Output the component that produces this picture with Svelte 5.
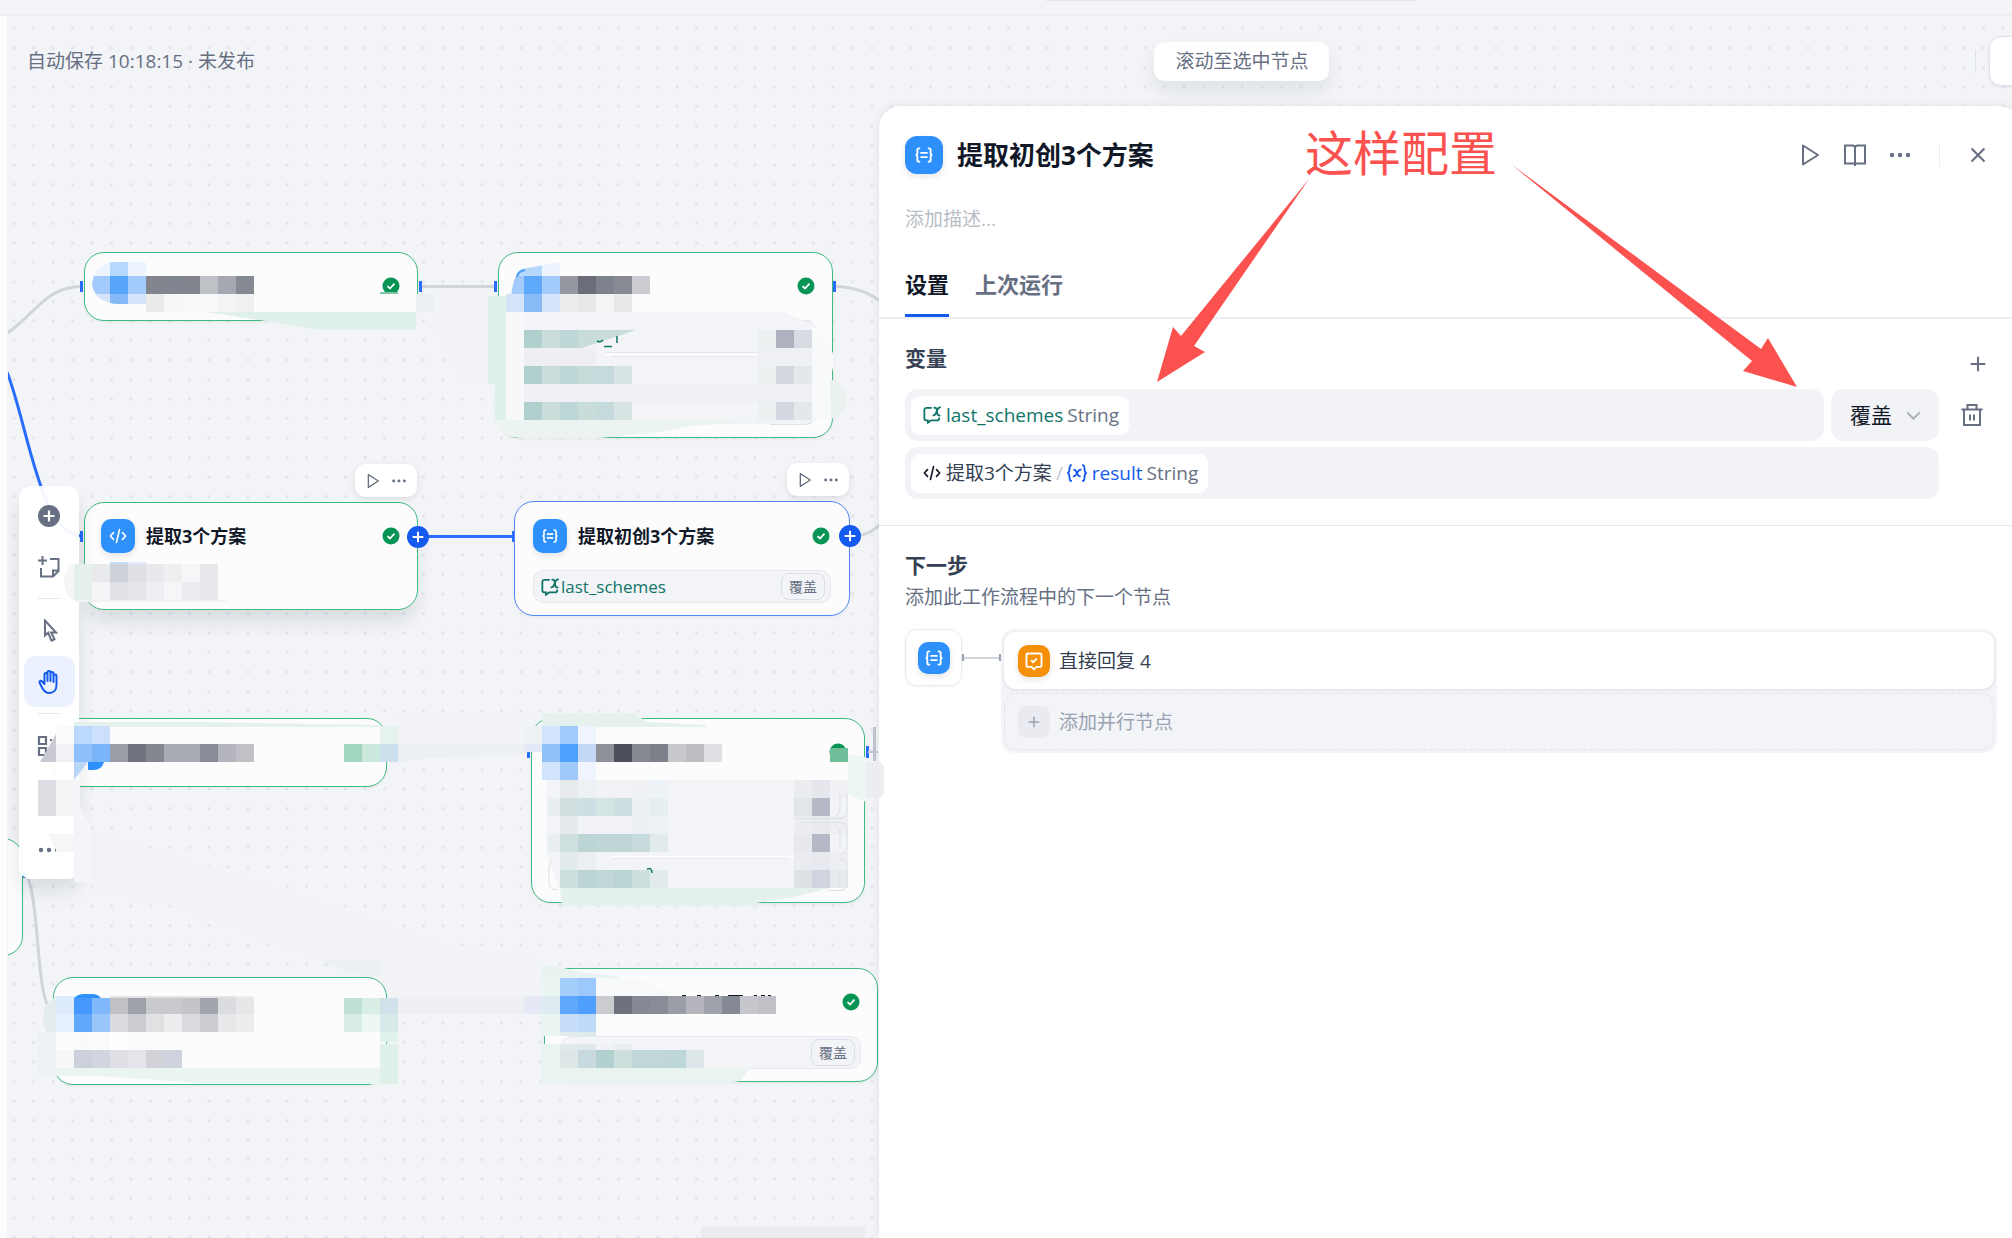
<script lang="ts">
	type Node = {
		x: number;
		y: number;
		w: number;
		h: number;
		title?: string;
		icon?: 'code' | 'assign';
		variable?: string;
		badge?: string;
		done?: boolean;
		selected?: boolean;
		raised?: boolean;
		toolbar?: boolean;
	};

	const nodes: Node[] = [
		{ x: -120, y: 838, w: 143, h: 118 },
		{ x: 84, y: 252, w: 334, h: 69, done: true },
		{ x: 498, y: 252, w: 335, h: 186, done: true },
		{ x: 84, y: 502, w: 334, h: 108, title: '提取3个方案', icon: 'code', done: true, raised: true, toolbar: true },
		{ x: 514, y: 501, w: 336, h: 115, title: '提取初创3个方案', icon: 'assign', variable: 'last_schemes', badge: '覆盖', done: true, selected: true, toolbar: true },
		{ x: 54, y: 718, w: 333, h: 69 },
		{ x: 531, y: 718, w: 334, h: 185, done: true },
		{ x: 53, y: 977, w: 334, h: 108 },
		{ x: 544, y: 968, w: 334, h: 114, variable: ' ', badge: '覆盖', done: true }
	];

	// mosaic rows: x, y, height, then one colour per 18px cell ('-' leaves a gap)
	const mosaic: [number, number, number, string][] = [
		[146, 276, 18, '83858e 808590 83858e bec1c6 a5a8b0 858992'],
		[146, 294, 18, 'ebebec f6f7f9 f8f9fa f8f9fa f3f4f5 eff0f2'],
		[380, 292, 2, '7fc4a2'],
		[380, 294, 18, 'fbfcfc fbfcfc ebf1f3'],

		[560, 276, 18, '9598a0 6b6e7a 7e828c 878a93 cbccd1'],
		[506, 294, 18, 'd5e5f9 87bbf8 d5e5f9 ececee e7e8ea f3f4f6 e7e8ea'],
		[524, 348, 18, 'efeff3 efeff3 efeff3 efeff3'],
		[524, 384, 18, 'eff0f4 eff0f4 eff0f4 eff0f4 eff0f4 eff0f4 eff0f4 eff0f4 eff0f4 eff0f4 eff0f4 eff0f4 eff0f4 eff0f4 eff0f4 eff0f4'],
		[524, 330, 18, 'b0d0ce c9ddda bcd7d5'],
		[524, 366, 18, 'b1cfcd c9ddda bcd7d5 c5dcda c5dadb d6e5e3'],
		[524, 402, 18, 'b0d0ce c9ddda bcd7d5 c8dcda c5dadb d6e5e3'],
		[758, 330, 18, 'ecf0f1 aeb2be d8dbe2'],
		[758, 348, 18, 'eff0f4 eff0f4 eff0f4'],
		[758, 366, 18, 'ecf0f1 d4d7df e4e8eb'],
		[758, 402, 18, 'ecf0f1 d4d7df e4e8eb'],

		[110, 562, 2, 'c6dcf7 dfeafa'],
		[74, 564, 18, 'e5f0ec e9eaed cfd1da dfe0e6 e8e9ed eeeff1 f5f6f8 e7e8ec'],
		[74, 582, 18, 'e5f0ec f5f5f8 e1e2e8 e4e5e9 edeef1 f5f6f8 ecedf1 e7e8ed'],

		[56, 726, 18, 'fafbfc bbd9fc cce0fc'],
		[380, 726, 18, 'e5f2ee'],
		[56, 744, 18, 'f1f2f5 8ec1fb 7ab5fb 9a9ea7 70737e 82868f a8abb4 a8abb4 898c96 b5b6bd c0c1c6'],
		[344, 744, 18, 'a1d5bf cbe8dc cbdfec'],
		[38, 780, 36, 'dcdde3 f4f5f6'],
		[56, 834, 18, 'f5f6f8'],

		[524, 726, 18, 'edf3f4 d0e5fc a2cbfd eff4fe'],
		[524, 744, 8, 'e4e9f7'],
		[542, 744, 18, '90c2fa 4fa1ff c2d8f6 8d9098 4b505c 858992 7c8089 c7c8cb bdbec4 dfe0e4'],
		[542, 762, 18, 'd0e5fc 9fc9f8 eff4fe'],
		[560, 780, 18, 'e7ebed eef1f4 f1f2f5 f1f2f5 eff1f5 edf2f6'],
		[560, 798, 18, 'd2e1e0 cddfe2 d5e5e4 cddfe2 eceff3 e5eef0'],
		[560, 816, 18, 'e6eaec f0f2f5 f1f2f5 f1f2f5 ecf0f3 ecf1f4'],
		[560, 834, 18, 'd0e0de bad5d4 bfd6d7 bed5d6 c7dbdd e1ebed'],
		[560, 852, 18, 'e1eaec ebeff2'],
		[560, 870, 18, 'cbdfdd bad5d4 bfd7d9 bbd4d4 cbdfde e1ebec'],
		[794, 780, 18, 'ebecf0 e6e7ec f0f1f4'],
		[794, 798, 18, 'e2e6eb b5b9c5'],
		[794, 816, 18, 'ecedf1 e9eaee eeeff2'],
		[794, 834, 18, 'e7e9ee b5b9c5'],
		[794, 852, 18, 'ebecf1 e9eaef eeeff2'],
		[794, 870, 18, 'dde0e5 d1d4de e6e9ed'],

		[56, 996, 2, 'deebfe - - e2e3e5 e2e3e5 e2e3e5 e2e3e5 e2e3e5 e2e3e5 e2e3e5 eeeeef'],
		[56, 998, 16, 'deebfe 4598fd 80b8fb bfc1c5 9da1a9 c9cace c9cace c4c5ca a2a5ad dbdce0 e6e7e9'],
		[56, 1014, 18, 'e6effd 61a7fa 99c5fa d9dbdf cbccd1 e0e1e3 ecedef d9dbdf cbccd1 e7e8ea ecedee'],
		[74, 1032, 18, 'fafafa fbfbfc fefefe fafbfb fafbfb fafbfb'],
		[56, 1050, 18, 'f6f7f9 ccd0da d2d5df dfe0e6 e4e5ea d2d3d8 cfd3dd'],
		[344, 998, 16, 'c0e2d4 d9eee4 cfe2e9'],
		[344, 1014, 18, 'daeee5 ecf6f2 d8e9e9'],
		[380, 1032, 10, 'e1f2eb'],
		[380, 1044, 40, 'e0f1ea'],

		[542, 978, 18, 'eaf5f0 a5cdfb 9dc8fc f8f9fa'],
		[524, 996, 18, 'e5e9f5 deecf1 5fa8fc 4f9fff cbccd0 6e727e 868993 898c96 9a9da6 b5b6bd 9fa2ab 858993 c6c7cc bfc1c6'],
		[542, 1014, 18, 'eaf5f0 c8ddf8 c0daf9'],
		[542, 1032, 4, 'eaf5f0 e3ecec dde9ec'],
		[542, 1044, 6, 'e9f4ef e2e9ea dee7e9 f0f2f5 e9eef0'],
		[542, 1050, 18, 'e9f4ef dde7e7 c8dadf b2d0ce ccdfdd c1d6d9 c1d6d9 bdd6d8 dce6e8']
	];

	const cells = mosaic.flatMap(([x, y, h, row]) =>
		row
			.split(' ')
			.map((color, i) => ({ x: x + i * 18, y, h, color }))
			.filter((cell) => cell.color !== '-')
	);

	let tab = $state('settings');
	let description = $state('');
	let mode = $state('over-write');
</script>

{#snippet assignIcon()}
	<svg viewBox="0 0 24 24" fill="none" stroke="currentColor" stroke-width="2.200" stroke-linecap="round" aria-hidden="true">
		<path d="M6.500 4H6a2 2 0 0 0-2 2v3.500a2 2 0 0 1-2 2.500 2 2 0 0 1 2 2.500V18a2 2 0 0 0 2 2h.5M17.500 4h.5a2 2 0 0 1 2 2v3.500a2 2 0 0 0 2 2.500 2 2 0 0 0-2 2.500V18a2 2 0 0 1-2 2h-.5M8.500 9.500h7M8.500 14.500h7" />
	</svg>
{/snippet}

{#snippet codeIcon()}
	<svg class="code" viewBox="0 0 24 24" fill="none" stroke="currentColor" stroke-width="2.200" stroke-linecap="round" stroke-linejoin="round" aria-hidden="true">
		<path d="M6 7.500 1.800 12 6 16.500M18 7.500l4.200 4.500-4.200 4.500M14 3.500l-4 17" />
	</svg>
{/snippet}

{#snippet bubbleIcon()}
	<svg class="bubble" viewBox="0 0 20 20" fill="none" stroke="currentColor" stroke-width="2" stroke-linecap="round" aria-hidden="true">
		<path d="M9 2H4a2.500 2.500 0 0 0-2.500 2.500v9A2.500 2.500 0 0 0 4 16h1.500v2.500L9 16h6.500a2.500 2.500 0 0 0 2.500-2.500" />
		<path d="M11.500 10.500c2 0 2.500-1.500 3.500-4s1.500-5 4-5M12.500 2c2.500-.5 2.500 1 3 4s.5 5 3 4.500" />
	</svg>
{/snippet}

{#snippet playIcon()}
	<svg viewBox="0 0 24 24" fill="none" stroke="currentColor" stroke-width="2" stroke-linejoin="round" aria-hidden="true">
		<path d="M5 2.500v19L20 12z" />
	</svg>
{/snippet}

{#snippet moreIcon()}
	<svg viewBox="0 0 24 24" fill="currentColor" aria-hidden="true">
		<circle cx="4" cy="12" r="2.200" /><circle cx="12" cy="12" r="2.200" /><circle cx="20" cy="12" r="2.200" />
	</svg>
{/snippet}

{#snippet plusIcon()}
	<svg viewBox="0 0 24 24" fill="none" stroke="currentColor" stroke-width="2.200" aria-hidden="true">
		<path d="M12 4v16M4 12h16" />
	</svg>
{/snippet}

<div class="app">
	<div class="canvas">
		<svg class="edges" aria-hidden="true">
			<defs>
				<pattern id="dots" x="4" y="19" width="19.5" height="19.5" patternUnits="userSpaceOnUse">
					<circle cx="10" cy="9.500" r="1.600" fill="#e2e4ea" />
				</pattern>
			</defs>
			<rect width="100%" height="100%" fill="url(#dots)" />
			<path class="smear" d="M92 830 250 880 450 945V1010L398 1000 320 960 170 905 92 890z" />
			<path class="smear" d="M398 998H542V960L440 945 300 930z" />
			<path class="smear" d="M398 712H542V758H398z" />
			<path class="smear" d="M434 294h60v90H460l-25-60z" />
			<g class="edge">
				<path d="M7 333C35 315 45 286.500 82 286.500" />
				<path d="M422 286.500H495" />
				<path d="M836 286.500C855 287 868 292 880 301" />
				<path d="M855 536C868 535 873 530 880 525" />
				<path d="M25 873C39 890 36 985 48 1006" />
			</g>
			<g class="edge active">
				<path d="M7 372C28 425 40 536 82 536" />
				<path d="M428 536.500H514" />
			</g>
			<g fill="#296dff">
				<path d="M80 281h3v11h-3zM419 281h3v11h-3zM494 281h3v11h-3zM833 281h3v11h-3zM80 531h3v11h-3zM512 531h3v11h-3zM527 752h3v6h-3zM866 746h3v12h-3zM23 872h3v6h-3z" />
			</g>
			<path d="M873 727h3v34h-3zM868 751h10v2H868z" fill="#c2c6d0" />
			<rect x="701" y="1227" width="164" height="20" fill="#e9ebef" />
		</svg>

		{#each nodes as node}
			<article
				class="node"
				class:selected={node.selected}
				class:raised={node.raised}
				style="left: {node.x}px; top: {node.y}px; width: {node.w}px; height: {node.h}px"
			>
				<header>
					{#if node.icon}
						<span class="block-icon">
							{#if node.icon === 'code'}{@render codeIcon()}{:else}{@render assignIcon()}{/if}
						</span>
						<h3>{node.title}</h3>
					{/if}
					{#if node.done}
						<svg class="check" viewBox="0 0 18 18" aria-label="succeeded">
							<circle cx="9" cy="9" r="8.500" fill="#079455" />
							<path d="M5.500 9.200 8 11.500l4.500-4.800" fill="none" stroke="#fff" stroke-width="1.800" />
						</svg>
					{/if}
				</header>
				{#if node.variable}
					<div class="assigned">
						{#if node.variable.trim()}{@render bubbleIcon()}{/if}
						<span>{node.variable}</span>
						<em>{node.badge}</em>
					</div>
				{/if}
				{#if node.toolbar}
					<div class="node-tools">
						<button aria-label="运行">{@render playIcon()}</button>
						<button aria-label="更多">{@render moreIcon()}</button>
					</div>
					<button class="node-add" aria-label="添加节点">{@render plusIcon()}</button>
				{/if}
			</article>
		{/each}

		<nav class="tools">
			<button aria-label="添加节点">
				<svg viewBox="0 0 24 24"><path fill="currentColor" fill-rule="evenodd" d="M12 1a11 11 0 1 1 0 22 11 11 0 0 1 0-22zm-1.100 5.500v4.400H6.500v2.200h4.400v4.400h2.200v-4.400h4.400v-2.200h-4.400V6.500z" /></svg>
			</button>
			<button aria-label="添加注释">
				<svg viewBox="0 0 24 24" fill="none" stroke="currentColor" stroke-width="2"><path d="M5.500 1v9M1 5.500h9M13 4h8.500v12L16 21.500H4V13M21.500 15.500H16v6" /></svg>
			</button>
			<hr />
			<button aria-label="指针模式">
				<svg viewBox="0 0 24 24" fill="none" stroke="currentColor" stroke-width="2"><path d="M8 1.500v15l3.200-2.800 3.300 8 3-1.400-3.300-6.800H19z" /></svg>
			</button>
			<button class="on" aria-label="手模式">
				<svg viewBox="0 0 24 24" fill="none" stroke="currentColor" stroke-width="2" stroke-linecap="round" stroke-linejoin="round"><path d="M7.500 13V4.500a1.500 1.500 0 0 1 3 0V11M10.500 11V2.500a1.500 1.500 0 0 1 3 0V11M13.500 11V3.500a1.500 1.500 0 0 1 3 0V12M16.500 12V6a1.500 1.500 0 0 1 3 0v9c0 5-3 8-7 8-4.500 0-6-2.500-7.500-5.500l-2.500-5c-.5-1.500 1.500-2.500 2.500-1L7.500 14" /></svg>
			</button>
			<hr />
			<button aria-label="整理节点">
				<svg viewBox="0 0 24 24" fill="none" stroke="currentColor" stroke-width="2.200"><path d="M2 3h7v7H2zM2 14h7v7H2zM13 6h2" /></svg>
			</button>
			<span class="gap"></span>
			<button aria-label="更多">{@render moreIcon()}</button>
		</nav>

		<svg class="mosaic" aria-hidden="true">
			<clipPath id="blob-a"><path d="M92 285Q94 262 116 262H146V304H120Q96 304 92 285z" /></clipPath>
			<clipPath id="blob-b"><path d="M511 296Q514 272 522 269L560 262V300H511z" /></clipPath>
			<g clip-path="url(#blob-a)">
				<path d="M92 262h54v14H92z" fill="#ecf4fe" /><path d="M110 262h18v14h-18z" fill="#b7d8fd" />
				<path d="M92 276h54v18H92z" fill="#a2cbfb" /><path d="M110 276h18v18h-18z" fill="#57a4fb" />
				<path d="M92 294h54v10H92z" fill="#d5e4f9" /><path d="M110 294h18v10h-18z" fill="#84b9f7" />
			</g>
			<path d="M206 312H416V330H320L266 321z" fill="#e0f0ea" />

			<g clip-path="url(#blob-b)">
				<path d="M506 262h36v14h-36z" fill="#b7d8fd" /><path d="M542 262h18v14h-18z" fill="#ecf4fe" />
				<path d="M506 276h54v18h-54z" fill="#a2cbfb" /><path d="M524 276h18v18h-18z" fill="#5fa9fd" />
			</g>
			<path d="M517 277q1-6 8-7" fill="none" stroke="#4a9cf8" stroke-width="2" />
			<path d="M488 296h18v124h-11q-2-20 0-36h-7z" fill="#e0f1ea" />
			<path d="M506 312h18v108h-18z" fill="#f7f8fa" />
			<path d="M524 312H783L802 320H812V424H524z" fill="#f2f4f7" />
			<path d="M812 330Q840 345 832 372L826 378H830V420H812z" fill="#f8f9fa" />
			<path d="M830 379Q846 384 846 400T831 419z" fill="#e8f1ee" />
			<path d="M495 420H780L690 426 660 432 600 438H520Q500 438 495 420z" fill="#ecf4f1" />
			<path d="M606 354.500H768M536 391H584" stroke="#fcfcfd" stroke-width="3" />
			<path d="M606 352.500H768M612 356.500H764" stroke="#e4e6eb" />
			<path d="M802 320.500q12 0 13 7M770 424.500h33q10 0 12-6" fill="none" stroke="#dfe2e8" />

			<path d="M64 582Q66 564 78 564V602Q66 600 64 582z" fill="#f3f5f6" />
			<path d="M76 600H230L222 602H76z" fill="#f0f2f4" />
			<path d="M88 762h16q-2 8-11 8h-5z" fill="#2e90fa" />
			<path d="M74 762h14L74 780z" fill="#b9d5f8" />
			<path d="M74 722H200L380 725V727H74z" fill="#e5f1ed" />
			<path d="M398 744H530V752L430 758 398 762z" fill="#edf0f3" />
			<path d="M40 762 56 734V762z" fill="#c9cad2" />
			<path d="M74 780H80V806L92 830V882H74z" fill="#f3f5f8" />
			<path d="M48 834 56 850V834z" fill="#f5f6f8" />

			<path d="M542 713H632L648 722 706 725V727H542z" fill="#e4f1ed" />
			<path d="M546 780H848V888H558L546 850z" fill="#f2f4f7" />
			<path d="M548 798h12v18h-12zM548 834h12v18h-12z" fill="#e9eff0" />
			<path d="M610 857H798" stroke="#fcfcfd" stroke-width="2" />
			<path d="M612 858.500H788" stroke="#e4e6eb" />
			<path d="M830 294h18v490h-18z" fill="none" />
			<path d="M842 819.500h6M842 855.500h6" stroke="#fcfcfd" stroke-width="2" />
			<path d="M830 748h18v14h-18z" fill="#6dbe99" />
			<path d="M848 754 866 757V802L848 795z" fill="#eef6f3" />
			<path d="M560 888H830L790 898 756 903V906H562z" fill="#e5f1ed" />

			<path d="M74 998q4-4 10-4h8q6 0 9 4z" fill="#2e90fa" />
			<path d="M56 997Q43 1003 43 1018 43 1028 47 1032H56z" fill="#e4ecf0" />
			<path d="M38 1032h18v44H38z" fill="#ecf1f3" />
			<path d="M56 1068H398V1084H370V1083H200L100 1076H56z" fill="#eaf5f1" />
			<path d="M320 960h60v16h-20z" fill="#ebf1f3" />
			<path d="M398 998H524V1014H398z" fill="#eeeff3" />

			<path d="M542 966H556L580 972 620 977V978H542z" fill="#e8f2ee" />
			<path d="M542 1068H750L740 1081 730 1083H542z" fill="#e9f3ef" />
			<path d="M596 978 640 978 670 992V996H596z" fill="#f8f9fa" />

			{#each cells as cell}
				<rect x={cell.x} y={cell.y} width="18" height={cell.h} fill="#{cell.color}" />
			{/each}
			<g fill="none" stroke="#dcdfe5">
				<path d="M840 794v15q0 5-5 8M795 818.500h45q7 0 7-8v-17M800 822.500h40q7 0 7 8v16q0 8-7 8M840 858.500q7 2 7 9v15q0 8-7 8h-12M552 860q-3 2-3 8v14q0 8 8 8M836 826q4 2 4 8v12M840 870v12q0 4-3 6" />
			</g>
			<path d="M578 330H636L582 348H578z" fill="#c8dcda" />
			<path d="M597 341q4 2 6-1M604 346.500h8M617 336v7M647 869q5-2 5 4" fill="none" stroke="#107569" stroke-width="1.500" />
			<path d="M682 995.500h4M697 995.500h4M715 995.500h4M728 995.500h15M754 995.500h3M761 995.500h4M768 995.500h3" stroke="#101828" />
		</svg>
	</div>

	<div class="topbar"></div>

	<div class="workspace">
		<header class="status">
			<p class="autosave">自动保存 10:18:15 · 未发布</p>
			<button class="locate">滚动至选中节点</button>
			<span class="bar"></span>
			<button class="ghost" aria-label="更多操作"></button>
		</header>

		<aside class="panel">
			<div class="panel-head">
				<span class="block-icon large">{@render assignIcon()}</span>
				<h2>提取初创3个方案</h2>
				<div class="actions">
					<button aria-label="运行此步骤">{@render playIcon()}</button>
					<button aria-label="帮助文档">
						<svg viewBox="0 0 24 24" fill="none" stroke="currentColor" stroke-width="2"><path d="M12 23V5a2.500 2.500 0 0 0-2.500-2.500H2v18h20v-18h-7.500A2.500 2.500 0 0 0 12 5" /></svg>
					</button>
					<button aria-label="更多">{@render moreIcon()}</button>
					<span class="bar"></span>
					<button aria-label="关闭">
						<svg viewBox="0 0 24 24" fill="none" stroke="currentColor" stroke-width="2.200"><path d="m5 5 14 14M19 5 5 19" /></svg>
					</button>
				</div>
			</div>
			<input class="description" bind:value={description} placeholder="添加描述..." aria-label="描述" />

			<div class="tabs" role="tablist">
				<button role="tab" aria-selected={tab === 'settings'} class:current={tab === 'settings'} onclick={() => (tab = 'settings')}>设置</button>
				<button role="tab" aria-selected={tab === 'last-run'} class:current={tab === 'last-run'} onclick={() => (tab = 'last-run')}>上次运行</button>
			</div>

			<section class="variables">
				<div class="section-head">
					<h4>变量</h4>
					<button aria-label="添加变量">{@render plusIcon()}</button>
				</div>
				<div class="assignment">
					<div class="fields">
						<div class="line">
							<button class="picker">
								<span class="chip">
									<span class="conversation">{@render bubbleIcon()}last_schemes</span>
									<span class="type">String</span>
								</span>
							</button>
							<span class="mode">
								<select bind:value={mode} aria-label="操作">
									<option value="over-write">覆盖</option>
									<option value="clear">清空</option>
									<option value="set">设置</option>
								</select>
								<svg viewBox="0 0 24 24" fill="none" stroke="currentColor" stroke-width="2.400" aria-hidden="true"><path d="m4 8 8 8 8-8" /></svg>
							</span>
						</div>
						<button class="picker">
							<span class="chip">
								<span class="source">{@render codeIcon()}提取3个方案</span>
								<i>/</i>
								<span class="output">
									<svg viewBox="0 0 24 24" fill="none" stroke="currentColor" stroke-width="2.200" stroke-linecap="round" aria-hidden="true"><path d="M5 2.500C3 2.500 3 4 3 7s0 4-2 5c2 1 2 2 2 5s0 4.500 2 4.500M19 2.500c2 0 2 1.500 2 4.500s0 4 2 5c-2 1-2 2-2 5s0 4.500-2 4.500M8 16c4 0 4-8 8.500-8M8.500 8c3.500 0 3 8 7 8" /></svg>result
								</span>
								<span class="type">String</span>
							</span>
						</button>
					</div>
					<button class="remove" aria-label="删除">
						<svg viewBox="0 0 24 24" fill="none" stroke="currentColor" stroke-width="2"><path d="M1.500 6.500h21M4 6.500V22h16V6.500M7.500 6V2h9v4M10 11.500v6M14 11.500v6" /></svg>
					</button>
				</div>
			</section>

			<section class="next">
				<h4>下一步</h4>
				<p>添加此工作流程中的下一个节点</p>
				<div class="flow">
					<span class="origin"><span class="block-icon">{@render assignIcon()}</span></span>
					<span class="link"></span>
					<div class="branches">
						<button class="branch">
							<span class="block-icon answer">
								<svg viewBox="0 0 24 24" fill="none" stroke="currentColor" stroke-width="2.200" stroke-linejoin="round" aria-hidden="true"><path d="M5 3h14a2 2 0 0 1 2 2v12a2 2 0 0 1-2 2h-4l-3 3-3-3H5a2 2 0 0 1-2-2V5a2 2 0 0 1 2-2zM8.500 11l2.500 2.500 4.500-4.500" /></svg>
							</span>
							直接回复 4
						</button>
						<button class="branch parallel"><span class="add">{@render plusIcon()}</span>添加并行节点</button>
					</div>
				</div>
			</section>
		</aside>
	</div>

	<div class="annotation">
		<svg aria-hidden="true">
			<path class="blot" d="M866 762h14l4 4v28l-5 4h-13z" />
			<path d="M1309 179 1181 336 1173 327 1157 382 1205 352 1194 346zM1512 165 1761 349 1768 338 1797 387 1743 371 1752 361z" />
		</svg>
		<p>这样配置</p>
	</div>
</div>

<style>
	:global(body) {
		margin: 0;
	}

	.app {
		position: relative;
		display: flex;
		flex-direction: column;
		min-height: 100vh;
		overflow: hidden;
		background: #f2f4f7;
		color: #354052;
		font-family: 'Open Sans', 'Noto Sans CJK SC', sans-serif;
		font-size: 19px;
		line-height: 28px;
	}

	button,
	input,
	select {
		padding: 0;
		border: none;
		background: none;
		color: inherit;
		font: inherit;
	}

	button {
		display: flex;
		align-items: center;
		cursor: pointer;
	}

	h2,
	h3,
	h4,
	p {
		margin: 0;
	}

	svg {
		flex: none;
	}

	.topbar {
		position: relative;
		height: 15px;
		border-bottom: 1px solid #e9ebf0;
		background: linear-gradient(#f2f4f7 60%, #eff1f4);
	}

	/* lower edge of the bar that is scrolled out of view */
	.topbar::after {
		content: '';
		position: absolute;
		top: 0;
		left: 52%;
		width: 370px;
		height: 1px;
		background: #e3e5ea;
	}

	.workspace {
		display: flex;
		flex: 1;
		flex-direction: column;
		border-left: 7px solid #fcfcfd;
	}

	/* canvas */
	.canvas {
		position: absolute;
		inset: 0;
		clip-path: inset(0 0 0 8px);
	}

	.edges,
	.mosaic {
		position: absolute;
		width: 100%;
		height: 100%;
	}

	.mosaic {
		pointer-events: none;
	}

	.smear {
		fill: #f1f3f6;
	}

	.edge {
		fill: none;
		stroke: #d0d5dc;
		stroke-width: 3px;
	}

	.edge.active {
		stroke: #296dff;
	}

	.node {
		position: absolute;
		box-sizing: border-box;
		padding: 16px;
		border: 1px solid #3dbb83;
		border-radius: 20px;
		background: #fcfcfd;
		box-shadow: 0 1px 3px rgba(16, 24, 40, 0.06);
	}

	.node.selected {
		padding: 17px 18px;
		border-color: #5289f6;
	}

	.node.raised {
		box-shadow: 0 14px 20px -4px rgba(16, 24, 40, 0.12);
	}

	.node header {
		display: flex;
		align-items: center;
		gap: 11px;
		height: 34px;
	}

	.node h3 {
		color: #101828;
		font-size: 18px;
		font-weight: 700;
	}

	.check {
		width: 18px;
		height: 18px;
		margin: 0 1px 0 auto;
	}

	.block-icon {
		display: flex;
		align-items: center;
		justify-content: center;
		width: 34px;
		height: 34px;
		flex: none;
		border-radius: 10px;
		background: #2e90fa;
		box-shadow: 0 3px 6px rgba(16, 24, 40, 0.1);
		color: #fff;
	}

	.block-icon svg {
		width: 18px;
		height: 18px;
	}

	.block-icon.large {
		width: 38px;
		height: 38px;
		border-radius: 12px;
	}

	.block-icon.large svg {
		width: 20px;
		height: 20px;
	}

	.assigned {
		display: flex;
		align-items: center;
		gap: 2px;
		box-sizing: border-box;
		height: 33px;
		margin-top: 17px;
		padding: 0 5px 0 7px;
		border: 1px solid #e6e8ed;
		border-radius: 10px;
		background: #f2f4f7;
		color: #107569;
		font-size: 17px;
	}

	.assigned em {
		margin-left: auto;
		padding: 0 7px;
		border: 1px solid #dcdfe5;
		border-radius: 8px;
		color: #676f83;
		font-size: 14px;
		font-style: normal;
		line-height: 25px;
	}

	.bubble {
		width: 18px;
		height: 18px;
	}

	.node-tools {
		position: absolute;
		top: -39px;
		right: 0;
		display: flex;
		align-items: center;
		justify-content: space-evenly;
		width: 62px;
		height: 33px;
		border-radius: 10px;
		background: #fff;
		box-shadow: 0 2px 6px rgba(16, 24, 40, 0.1);
		color: #676f83;
	}

	.node-tools svg {
		display: block;
		width: 16px;
		height: 16px;
	}

	.node-add {
		position: absolute;
		top: 23px;
		right: -12px;
		justify-content: center;
		width: 22px;
		height: 22px;
		border-radius: 50%;
		background: #155aef;
		color: #fff;
	}

	.node-add svg {
		width: 16px;
		height: 16px;
		stroke-width: 3px;
	}

	.tools {
		position: absolute;
		top: 486px;
		left: 19px;
		display: flex;
		flex-direction: column;
		align-items: center;
		box-sizing: border-box;
		width: 60px;
		padding: 4px;
		border-radius: 12px;
		background: rgba(255, 255, 255, 0.95);
		box-shadow: 0 12px 20px -2px rgba(16, 24, 40, 0.12);
		color: #676f83;
	}

	.tools button {
		justify-content: center;
		width: 51px;
		height: 51px;
		border-radius: 12px;
	}

	.tools svg {
		width: 24px;
		height: 24px;
	}

	.tools .on {
		background: #ebf1fe;
		color: #155aef;
	}

	.tools hr {
		width: 22px;
		height: 1px;
		margin: 6px 0;
		border: none;
		background: #e3e5ea;
	}

	.tools .gap {
		height: 53px;
	}

	/* status row */
	.status {
		position: relative;
		display: flex;
		align-items: center;
		height: 90px;
		padding-left: 20px;
	}

	.autosave {
		width: 56.8%;
		color: #676f83;
	}

	.locate {
		height: 39px;
		padding: 0 21px;
		border-radius: 10px;
		background: #fff;
		box-shadow: 0 10px 18px rgba(16, 24, 40, 0.08);
		color: #676f83;
	}

	.bar {
		width: 1px;
		height: 23px;
		background: #dfe2e8;
	}

	.status .bar {
		margin-left: auto;
	}

	.ghost {
		width: 60px;
		height: 50px;
		margin: 0 -37px 0 13px;
		border: 1px solid #dfe2e8;
		border-radius: 12px;
		background: #fff;
		box-shadow: 0 1px 3px rgba(16, 24, 40, 0.08);
	}

	/* panel */
	.panel {
		position: relative;
		flex: 1;
		margin: 0 -9px 0 872px;
		border-radius: 22px 22px 0 0;
		background: #fff;
		box-shadow: 0 0 10px rgba(16, 24, 40, 0.08);
	}

	.panel-head {
		display: flex;
		align-items: center;
		gap: 14px;
		padding: 30px 32px 0 26px;
	}

	.panel-head h2 {
		color: #101828;
		font-size: 26px;
		line-height: 38px;
	}

	.actions {
		display: flex;
		align-items: center;
		gap: 21px;
		margin-left: auto;
		color: #676f83;
	}

	.actions svg {
		width: 24px;
		height: 24px;
	}

	.actions .bar {
		margin: 0 6px;
		background: #e9ebf0;
	}

	.actions button:last-child svg {
		width: 22px;
		height: 22px;
	}

	.description {
		display: block;
		box-sizing: border-box;
		width: 100%;
		height: 34px;
		margin-top: 28px;
		padding: 0 26px;
	}

	.description::placeholder {
		color: #b9bdc6;
	}

	.tabs {
		display: flex;
		gap: 26px;
		margin-top: 33px;
		padding: 0 26px;
		border-bottom: 2px solid #ebedf0;
	}

	.tabs button {
		box-sizing: content-box;
		height: 30px;
		padding-bottom: 15px;
		border-bottom: 3px solid transparent;
		color: #676f83;
		font-size: 22px;
		font-weight: 700;
	}

	.tabs .current {
		border-color: #155aef;
		color: #101828;
	}

	h4 {
		font-size: 21px;
		font-weight: 700;
		line-height: 30px;
	}

	.variables {
		padding: 24px 24px 26px 26px;
		border-bottom: 1px solid #e5e7eb;
	}

	.section-head {
		display: flex;
		align-items: flex-start;
		justify-content: space-between;
		height: 46px;
		padding-right: 8px;
	}

	.section-head button {
		margin-top: 10px;
		color: #676f83;
	}

	.section-head svg {
		width: 22px;
		height: 22px;
	}

	.assignment {
		display: flex;
		align-items: flex-start;
	}

	.fields {
		display: flex;
		flex: 1;
		flex-direction: column;
		gap: 6px;
	}

	.line {
		display: flex;
		gap: 7px;
	}

	.picker {
		flex: 1;
		min-height: 52px;
		padding: 0 6px;
		border-radius: 13px;
		background: #f2f3f7;
	}

	.chip {
		display: flex;
		align-items: center;
		gap: 4px;
		height: 39px;
		padding: 0 10px 0 12px;
		border-radius: 9px;
		background: #fff;
	}

	.chip span {
		display: flex;
		align-items: center;
		gap: 5px;
	}

	.chip svg {
		width: 20px;
		height: 20px;
	}

	.chip .bubble,
	.chip .code {
		width: 18px;
		height: 18px;
	}

	.chip .code {
		color: #101828;
	}

	.chip i {
		color: #c3c8d2;
		font-style: normal;
	}

	.conversation {
		color: #107569;
	}

	.output {
		color: #155aef;
	}

	.type {
		color: #676f83;
	}

	.mode {
		position: relative;
		display: flex;
		align-items: center;
	}

	.mode select {
		width: 108px;
		height: 52px;
		padding: 0 19px;
		border-radius: 13px;
		background: #f2f3f7;
		color: #101828;
		font-size: 21px;
		appearance: none;
	}

	.mode svg {
		position: absolute;
		right: 16px;
		width: 19px;
		height: 19px;
		color: #a8adb8;
		pointer-events: none;
	}

	.remove {
		margin: 14px 13px 0 21px;
		color: #676f83;
	}

	.remove svg {
		width: 24px;
		height: 24px;
	}

	.next {
		padding: 24px 24px 0 26px;
	}

	.next p {
		margin-top: 3px;
		color: #676f83;
	}

	.flow {
		display: flex;
		align-items: flex-start;
		margin-top: 18px;
	}

	.origin {
		display: flex;
		align-items: center;
		justify-content: center;
		width: 55px;
		height: 55px;
		border: 1px solid #e9ebf0;
		border-radius: 12px;
		box-shadow: 0 1px 3px rgba(16, 24, 40, 0.06);
	}

	.flow .block-icon {
		width: 32px;
		height: 32px;
	}

	.flow .block-icon svg {
		width: 20px;
		height: 20px;
	}

	.flow .answer {
		background: #f79009;
	}

	.link {
		width: 35px;
		height: 7px;
		margin-top: 25px;
		border: solid #98a2b3;
		border-width: 0 2px;
		background: linear-gradient(transparent 3px, #d0d5dc 3px, #d0d5dc 5px, transparent 5px);
	}

	.branches {
		display: flex;
		flex: 1;
		flex-direction: column;
		gap: 4px;
		padding: 3px;
		border-radius: 14px;
		background: #f2f4f7;
	}

	.branch {
		gap: 9px;
		height: 57px;
		padding: 0 13px;
		border: 1px solid transparent;
		border-radius: 12px;
		background: #fff;
		box-shadow: 0 1px 3px rgba(16, 24, 40, 0.1);
	}

	.parallel {
		border: 1px dashed #dfe2e8;
		background: none;
		box-shadow: none;
		color: #98a2b3;
	}

	.add {
		display: flex;
		align-items: center;
		justify-content: center;
		width: 32px;
		height: 32px;
		border-radius: 8px;
		background: #e9ebf0;
	}

	.add svg {
		width: 16px;
		height: 16px;
	}

	/* red callout over the panel */
	.annotation {
		position: absolute;
		inset: 0;
		color: #fb5250;
		pointer-events: none;
	}

	.annotation svg {
		width: 100%;
		height: 100%;
		fill: currentColor;
	}

	.blot {
		fill: #ecedf1;
	}

	.annotation p {
		position: absolute;
		top: 125px;
		left: 1305px;
		font-size: 48px;
		line-height: 56px;
	}
</style>
